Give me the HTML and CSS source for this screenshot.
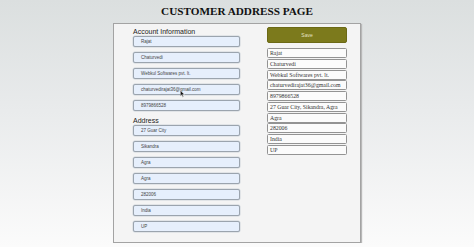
FILE: index.html
```html
<!DOCTYPE html>
<html>
<head>
    <title>Customer Address Page</title>
    <link rel="stylesheet" href="styles.css">
</head>
<body>
    <h1 class="page-title">CUSTOMER ADDRESS PAGE</h1>
    <div id="addressCard">
        <div class="form-col">
            <div class="section-label">Account Information</div>
            <div class="field">Rajat</div>
            <div class="field">Chaturvedi</div>
            <div class="field">Webkul Softwares pvt. lt.</div>
            <div class="field">chaturvedirajat36@gmail.com</div>
            <div class="field">8979866528</div>
            <div class="section-label">Address</div>
            <div class="field">27 Guar City</div>
            <div class="field">Sikandra</div>
            <div class="field">Agra</div>
            <div class="field">Agra</div>
            <div class="field">282006</div>
            <div class="field">India</div>
            <div class="field">UP</div>
        </div>
        <div class="preview-col">
            <div class="save-btn">Save</div>
            <div class="preview-box">Rajat</div>
            <div class="preview-box">Chaturvedi</div>
            <div class="preview-box">Webkul Softwares pvt. lt.</div>
            <div class="preview-box">chaturvedirajat36@gmail.com</div>
            <div class="preview-box">8979866528</div>
            <div class="preview-box">27 Guar City, Sikandra, Agra</div>
            <div class="preview-box">Agra</div>
            <div class="preview-box">282006</div>
            <div class="preview-box">India</div>
            <div class="preview-box">UP</div>
        </div>
    </div>
    <svg class="mouse-cursor" viewBox="0 0 8 12" width="5" height="8">
        <path d="M0.5 0.5 L0.5 9.5 L2.8 7.4 L4.4 11 L5.8 10.4 L4.2 6.9 L7.3 6.9 Z" fill="#111" stroke="#fff" stroke-width="0.8"/>
    </svg>
</body>
</html>
```

FILE: styles.css
```css
html {
    height: 100%;
    background: linear-gradient(#dbdfdf, #e9ebec 45%, #fbfbfb);
}

body {
    margin: 0;
    font-family: "Liberation Sans", Arial, sans-serif;
}

.page-title {
    margin: 4px 0 5px;
    font-family: "Liberation Serif", "Times New Roman", serif;
    font-size: 11.2px;
    line-height: 14px;
    text-align: center;
    color: #111;
}

#addressCard {
    display: flex;
    gap: 27px;
    width: 248px;
    height: 220px;
    margin: 0 auto;
    padding: 3px 0 0 19px;
    box-sizing: border-box;
    background-color: #f4f4f4;
    border: 1px solid #a3a3a3;
    box-shadow: 1px 1px 1px #b8b8b8;
}

.form-col {
    width: 107px;
}

.section-label {
    font-size: 7px;
    line-height: 9px;
    color: #222;
}

.field {
    height: 11px;
    margin-bottom: 5px;
    padding-left: 7px;
    box-sizing: border-box;
    background-color: #e6effc;
    border: 1px solid #9ba4ae;
    border-radius: 2px;
    box-shadow: 0 0 0 0.5px #cdd3da;
    font-size: 4.5px;
    line-height: 9px;
    color: #444;
}

.preview-col {
    width: 80px;
}

.save-btn {
    height: 16px;
    margin-bottom: 5px;
    background-color: #7c7a1c;
    border: 1px solid #6b6916;
    border-radius: 2px;
    box-sizing: border-box;
    font-size: 5px;
    line-height: 14px;
    text-align: center;
    color: #e4e2c4;
}

.preview-box {
    height: 10px;
    margin-bottom: 0.75px;
    padding-left: 2px;
    box-sizing: border-box;
    background-color: #fbfbfb;
    border: 1px solid #939393;
    border-radius: 1.5px;
    font-family: "Liberation Serif", "Times New Roman", serif;
    font-size: 5.8px;
    line-height: 8px;
    color: #333;
    white-space: nowrap;
    overflow: hidden;
}

.mouse-cursor {
    position: absolute;
    left: 180px;
    top: 90px;
}
```
